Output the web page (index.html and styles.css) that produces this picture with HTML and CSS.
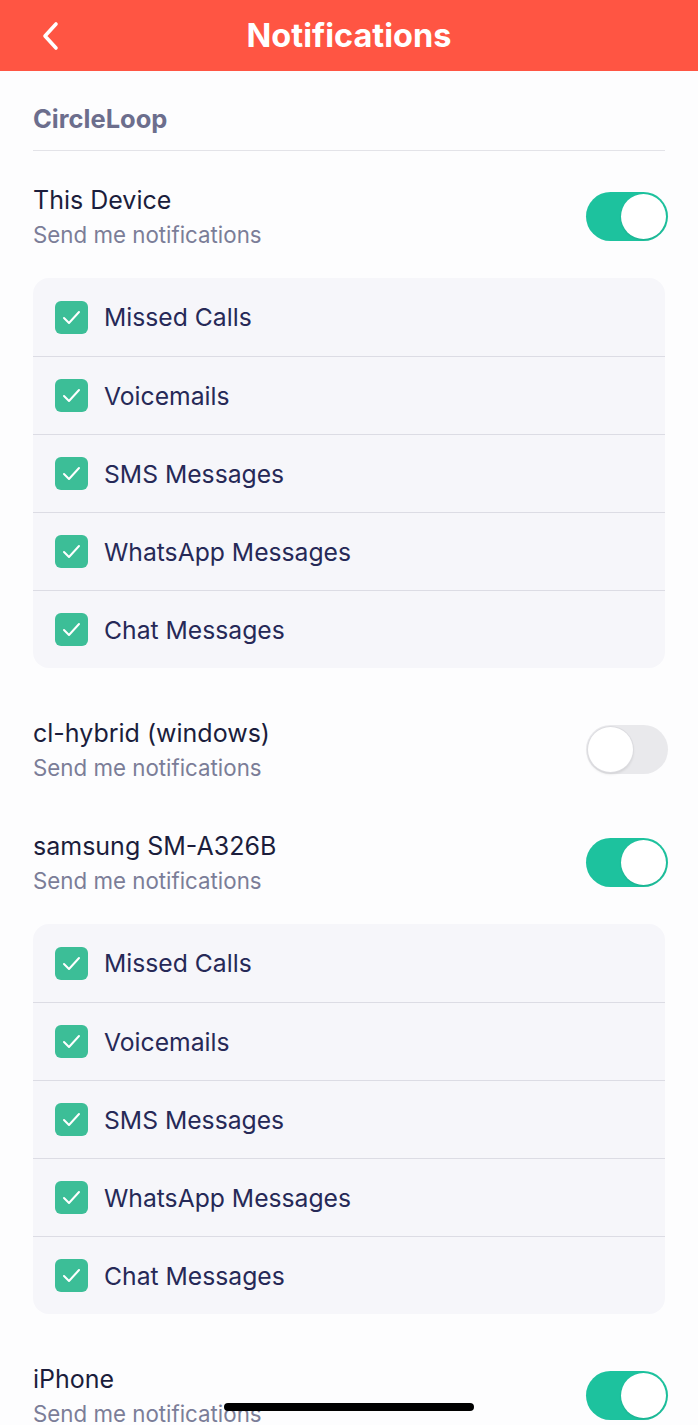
FILE: index.html
```html
<!DOCTYPE html>
<html>
<head>
	<meta charset="utf-8">
	<title>Notifications</title>
	<link rel="stylesheet" href="styles.css">
</head>
<body>
	<header class="topbar">
		<a class="back" href="#">
			<svg width="22" height="30" viewBox="0 0 22 30"><path d="M16 3 L5 15 L16 27" fill="none" stroke="#fff" stroke-width="3.6" stroke-linecap="round" stroke-linejoin="round"/></svg>
		</a>
		<h1>Notifications</h1>
		<span></span>
	</header>

	<div class="content">
		<h2 class="group">CircleLoop</h2>

		<div class="device first">
			<div class="info">
				<p class="name">This Device</p>
				<p class="sub">Send me notifications</p>
			</div>
			<span class="toggle on"><i></i></span>
		</div>
		<ul class="options">
			<li><span class="check"></span>Missed Calls</li>
			<li><span class="check"></span>Voicemails</li>
			<li><span class="check"></span>SMS Messages</li>
			<li><span class="check"></span>WhatsApp Messages</li>
			<li><span class="check"></span>Chat Messages</li>
		</ul>

		<div class="device">
			<div class="info">
				<p class="name">cl-hybrid (windows)</p>
				<p class="sub">Send me notifications</p>
			</div>
			<span class="toggle"><i></i></span>
		</div>

		<div class="device">
			<div class="info">
				<p class="name">samsung SM-A326B</p>
				<p class="sub">Send me notifications</p>
			</div>
			<span class="toggle on"><i></i></span>
		</div>
		<ul class="options">
			<li><span class="check"></span>Missed Calls</li>
			<li><span class="check"></span>Voicemails</li>
			<li><span class="check"></span>SMS Messages</li>
			<li><span class="check"></span>WhatsApp Messages</li>
			<li><span class="check"></span>Chat Messages</li>
		</ul>

		<div class="device">
			<div class="info">
				<p class="name">iPhone</p>
				<p class="sub">Send me notifications</p>
			</div>
			<span class="toggle on"><i></i></span>
		</div>
	</div>

	<div class="homebar"></div>
</body>
</html>
```

FILE: styles.css
```css
body{
	margin:0;
	padding:0;
	background-color:#fdfdfe;
	font-family:Inter,Roboto,"Liberation Sans",sans-serif;
	color:#1d1f42;
	height:1425px;
	overflow:hidden;
}
.topbar{
	display:grid;
	grid-template-columns:1fr auto 1fr;
	align-items:center;
	height:71px;
	background-color:#ff5543;
}
.back{
	display:flex;
	padding-left:40px;
	height:71px;
	align-items:center;
}
.topbar h1{
	margin:0;
	color:#fff;
	font-size:32.5px;
	font-weight:700;
}
.content{
	padding:0 33px;
}
.group{
	margin:0;
	height:80px;
	padding-top:34px;
	box-sizing:border-box;
	border-bottom:1px solid #e3e3e8;
	font-size:25.5px;
	line-height:28px;
	font-weight:700;
	color:#6c6e8d;
}
.device{
	display:flex;
	justify-content:space-between;
	align-items:center;
	margin-top:49px;
}
.device.first{
	margin-top:33px;
}
.device + .device{
	margin-top:48px;
}
.info p{
	margin:0;
}
.name{
	font-size:25px;
	line-height:32px;
	color:#1b1d3c;
}
.sub{
	margin-top:5px !important;
	font-size:22.3px;
	line-height:28px;
	color:#7b7d98;
}
/*开关*/
.toggle{
	position:relative;
	display:block;
	width:82px;
	height:49px;
	border-radius:25px;
	background-color:#e9e9ec;
	margin-right:-3px;
}
.toggle i{
	position:absolute;
	top:2px;
	left:2px;
	width:45px;
	height:45px;
	border-radius:50%;
	background-color:#fff;
	box-shadow:0 0 0 1px #dcdce0,0 2px 3px rgba(0,0,0,0.12);
}
.toggle.on{
	background-color:#1dc29e;
}
.toggle.on i{
	left:auto;
	right:2px;
	box-shadow:0 1px 2px rgba(0,0,0,0.1);
}
.options{
	list-style:none;
	margin:29px 0 0;
	padding:0;
	background-color:#f6f6fa;
	border-radius:16px;
}
.options li{
	display:flex;
	align-items:center;
	gap:16px;
	height:78px;
	box-sizing:border-box;
	padding-left:22px;
	border-top:1px solid #dcdce4;
	font-size:24.7px;
	color:#262957;
}
.options li:first-child{
	border-top:none;
}
.check{
	display:block;
	width:33px;
	height:33px;
	border-radius:6px;
	background-color:#3cbe97;
	background-image:url("data:image/svg+xml,%3Csvg xmlns='http://www.w3.org/2000/svg' viewBox='0 0 33 33'%3E%3Cpath d='M9 17 L14 22 L24 11' fill='none' stroke='white' stroke-width='2' stroke-linecap='round' stroke-linejoin='round'/%3E%3C/svg%3E");
}
.homebar{
	position:fixed;
	left:224px;
	top:1403px;
	width:250px;
	height:8px;
	border-radius:4px;
	background-color:#000;
}
```
